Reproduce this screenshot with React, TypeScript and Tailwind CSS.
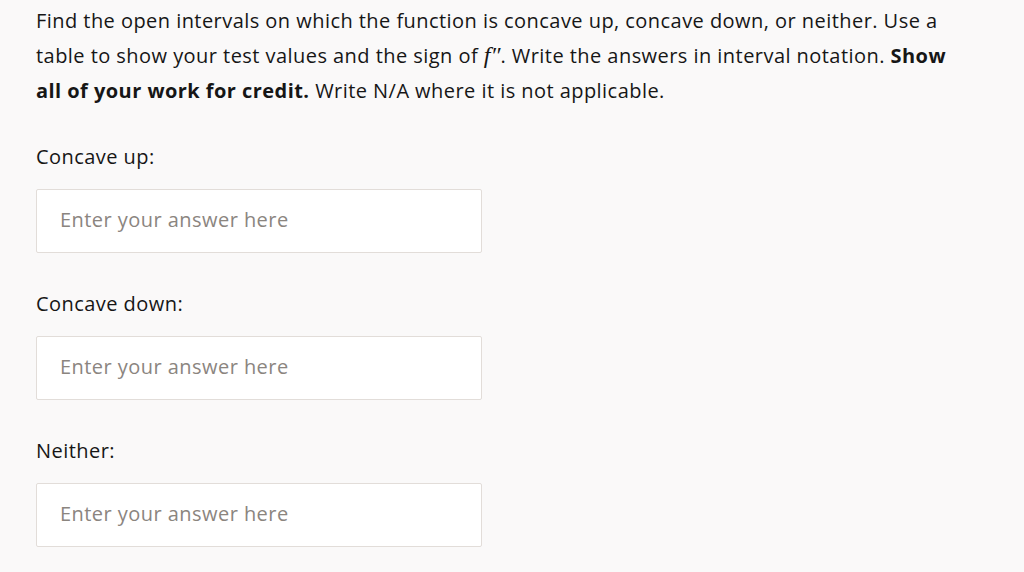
export default function App() {
  const fields = ['Concave up:', 'Concave down:', 'Neither:']
  return (
    <div className="min-h-[572px] w-full bg-[#faf9f9] px-[36px] pt-[3px] text-[#161616] tracking-[0.45px]" style={{ fontFamily: '"Open Sans", sans-serif' }}>
      <p className="w-[980px] text-[20px] leading-[35px]">
        Find the open intervals on which the function is concave up, concave down, or neither. Use a
        <br />
        table to show your test values and the sign of{' '}
        <span className="italic text-[24px] tracking-normal" style={{ fontFamily: '"Liberation Serif", serif' }}>
          f″
        </span>
        . Write the answers in interval notation. <b>Show</b>
        <br />
        <b>all of your work for credit.</b> Write N/A where it is not applicable.
      </p>
      <div className="mt-[31px] flex flex-col">
        {fields.map((label) => (
          <div key={label} className="mb-[33px] flex flex-col">
            <label className="text-[20px] leading-[35px]">{label}</label>
            <input
              className="mt-[15px] h-[64px] w-[446px] rounded-[2px] border border-[#e2ddd9] bg-white px-[23px] pb-[4px] text-[20px] tracking-[0.45px] outline-none placeholder:text-[#8b857f]"
              placeholder="Enter your answer here"
              style={{ fontFamily: '"Open Sans", sans-serif' }}
            />
          </div>
        ))}
      </div>
    </div>
  )
}
